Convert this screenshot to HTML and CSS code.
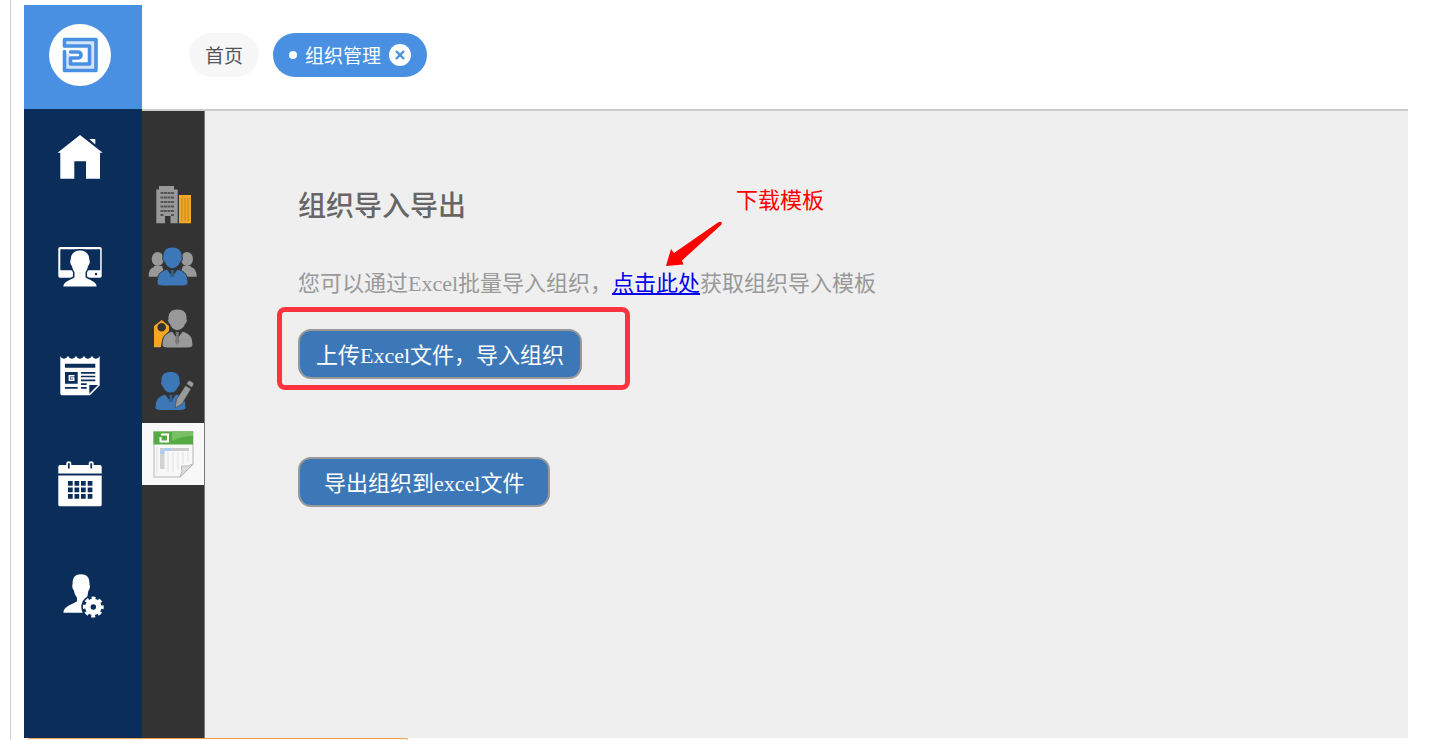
FILE: index.html
```html
<!DOCTYPE html>
<html lang="zh-CN">
<head>
    <meta charset="UTF-8">
    <meta name="viewport" content="width=device-width, initial-scale=1.0">
    <title>组织管理</title>
    <link rel="stylesheet" href="styles.css">
</head>
<body>
    <div class="page">
        <div class="app">
            <div class="sidebar">
                <a class="logo" href="#" aria-label="logo">
                    <svg width="62" height="62" viewBox="0 0 62 62">
                        <circle cx="31" cy="31" r="31" fill="#fff"/>
                        <path d="M15 18.5H44V43.5H18V30" fill="none" stroke="#d3e4f8" stroke-width="6"/>
                        <g fill="none" stroke="#4a90e2" stroke-width="3.6" stroke-linejoin="round" stroke-linecap="round">
                            <path d="M15.500 22V15.500H47V46.500H15.500V27.500"/>
                            <path d="M15.500 22H40.500V40H21.500V34H28.500Q32 34 32 31T28.500 28H21.500"/>
                        </g>
                    </svg>
                </a>
                <nav class="main-nav">
                    <a href="#" aria-label="首页">
                        <svg viewBox="0 0 48 48">
                            <path d="M24 1L46.700 18.700H44V44.700H30V27.300H18.300V44.700H4.300V18.700H1.500ZM33.300 5H39.300V10.500Z"/>
                        </svg>
                    </a>
                    <a href="#" aria-label="用户">
                        <svg viewBox="0 0 48 48">
                            <path fill-rule="evenodd" d="M4 4H44Q45.700 4 45.700 5.500V33Q45.700 34.700 44 34.700H4Q2.300 34.700 2.300 33V5.500Q2.300 4 4 4ZM4.300 6.200V27.300H44.200V6.200Z"/>
                            <circle class="cut" cx="40" cy="31" r="1.200"/>
                            <path class="outlined" d="M24 7.500C18 7.500 14.700 11 14.700 17C13.500 18 14.500 22 16 23C16.500 26 17.500 28 18.500 29V34C17 37 8 37 7.300 43.500H40.700C40 37 31 37 29.500 34V29C30.500 28 31.500 26 32 23C33.500 22 34.500 18 33.300 17C33.300 11 30 7.500 24 7.500Z"/>
                        </svg>
                    </a>
                    <a href="#" aria-label="新闻">
                        <svg viewBox="0 0 48 48">
                            <path d="M4.300 4Q5.600 7 8 6.800T12 4Q13.500 7 16 6.800T20 4Q21.500 7 24 6.800T28 4Q29.500 7 32 6.800T36 4Q37.500 7 40 6.800T43.700 4V33.500L34 43.300H6Q4.300 43.300 4.300 41.500Z"/>
                            <path class="cut" d="M9 11.700H39.300V15.700H9ZM9 20H21.700V31.700H9ZM25 20H39.300V21.700H25ZM25 23.700H39.300V25.300H25ZM25 27.500H39.300V29.200H25ZM25 31.300H30.700V33H25ZM25 35H30.700V36.700H25ZM9 35H21.700V36.700H9ZM33.300 33H42L33.300 41.700Z"/>
                            <path d="M18.500 23.800H13.300V28.200H17.800V26H14.500" fill="none" stroke="#fff" stroke-width="1.400"/>
                        </svg>
                    </a>
                    <a href="#" aria-label="日历">
                        <svg viewBox="0 0 48 48">
                            <path d="M4 4H10.300V2Q10.300 .3 12.800 .3T15.300 2V4H32.700V2Q32.700 .3 35.200 .3T37.700 2V4H44Q45.700 4 45.700 5.700V12.500H2.300V5.700Q2.300 4 4 4ZM2.300 14.500H45.700V43.700Q45.700 45.300 44 45.300H4Q2.300 45.300 2.300 43.700Z"/>
                            <path class="cut" d="M12 2.200H13.700V7.500H12ZM34.400 2.200H36.100V7.500H34.400ZM12 20H16.700V24.700H12ZM18.500 20H23.200V24.700H18.500ZM25 20H29.700V24.700H25ZM31.700 20H36.400V24.700H31.700ZM12 26.500H16.700V31.200H12ZM18.500 26.500H23.200V31.200H18.500ZM25 26.500H29.700V31.200H25ZM31.700 26.500H36.400V31.200H31.700ZM12 33H16.700V37.700H12ZM18.500 33H23.200V37.700H18.500ZM25 33H29.700V37.700H25ZM31.700 33H36.400V37.700H31.700Z"/>
                        </svg>
                    </a>
                    <a href="#" aria-label="设置">
                        <svg viewBox="0 0 48 48">
                            <path d="M25 4.300C19.500 4.300 16.500 7 16.600 14C15.800 16 16.700 19.500 18 20.500C18.300 23.500 19.500 26 21 27.500V31C19 34 8 35 7.300 42.700H28L31 28C32 24 32 22 32.500 20.500C34 19 34.300 16 33.500 14C33.600 7 30.500 4.300 25 4.300Z"/>
                            <circle class="cut" cx="37.300" cy="37" r="12"/>
                            <circle cx="37.300" cy="37" r="5.500" fill="none" stroke="#fff" stroke-width="5.500"/>
                            <circle cx="37.300" cy="37" r="8.700" fill="none" stroke="#fff" stroke-width="3.400" stroke-dasharray="3.830 3" stroke-dashoffset="1.915"/>
                        </svg>
                    </a>
                </nav>
            </div>

            <div class="workspace">
                <header class="tabs">
                    <a class="tab" href="#">首页</a>
                    <div class="tab active">
                        <span class="dot"></span>
                        <span class="label">组织管理</span>
                        <button class="close" type="button" aria-label="关闭">
                            <svg width="22" height="22" viewBox="0 0 22 22">
                                <circle cx="11" cy="11" r="11" fill="#fff"/>
                                <path d="M7 7L15 15M15 7L7 15" stroke="#4a90e2" stroke-width="2.400"/>
                            </svg>
                        </button>
                    </div>
                </header>

                <div class="body">
                    <nav class="sub-nav">
                        <a href="#" aria-label="组织">
                            <svg viewBox="0 0 63 62">
                                <path d="M14.300 48.300V14.500H17V11H32V14.500H35.700V48.300H28.500V41H23V48.300Z" fill="#999"/>
                                <path d="M18.500 18H32M18.500 22.500H32M18.500 27H32M18.500 31.500H32M18.500 36H32M18.500 40H22M29 40H32" stroke="#555" stroke-width="2" stroke-dasharray="3 .5"/>
                                <path d="M37 20H49V48.300H37Z" fill="#f5a623"/>
                                <path d="M40 23V46M43 23V46M46 23V46" stroke="#bd872f" stroke-width="1"/>
                            </svg>
                        </a>
                        <a href="#" aria-label="人员">
                            <svg viewBox="0 0 63 62">
                                <g fill="#999">
                                    <ellipse cx="15.700" cy="22" rx="6" ry="7"/>
                                    <path d="M12 29H20L24 39.700H6.700Q6 32 12 30Z"/>
                                    <ellipse cx="45" cy="22" rx="6" ry="7"/>
                                    <path d="M49 29H41L37 39.700H54.700Q55 32 49 30Z"/>
                                </g>
                                <g fill="#3c78b8" stroke="#333" stroke-width="1">
                                    <path d="M15 47C15 37 18 35 25 32L30.300 39L35.600 32C43 35 46 37 46 47Q44 49 41 49H20Q17 49 15 47Z"/>
                                    <path d="M30.300 10C24 10 20.500 14 21 20C20 21 21 24 22.500 25C24 29 27 31.500 30.300 31.500S37 29 38.500 25C40 24 41 21 40 20C40.500 14 37 10 30.300 10Z"/>
                                </g>
                                <path d="M28.500 33H32L31.500 36L32.500 40H28L29.200 36Z" fill="#315f90"/>
                            </svg>
                        </a>
                        <a href="#" aria-label="角色">
                            <svg viewBox="0 0 63 62">
                                <path fill-rule="evenodd" fill="#f5a623" d="M19.700 21L27 27V32L21 39L18.700 48.300H12V27ZM19.700 24A4.300 4.300 0 1 0 19.700 32.600A4.300 4.300 0 1 0 19.700 24Z"/>
                                <g fill="#999" stroke="#333" stroke-width="1">
                                    <path d="M20 47C20 37 23 35 30 32L35.300 39L40.600 32C48 35 51 37 51 47Q49 49 46 49H25Q22 49 20 47Z"/>
                                    <path d="M35.300 10C29 10 25.500 14 26 20C25 21 26 24 27.500 25C29 29 32 31.500 35.300 31.500S42 29 43.500 25C45 24 46 21 45 20C45.500 14 42 10 35.300 10Z"/>
                                </g>
                                <path d="M33.500 33H37L36.500 36L37.500 43L35.300 46L33 43L34.200 36Z" fill="#777"/>
                            </svg>
                        </a>
                        <a href="#" aria-label="编辑">
                            <svg viewBox="0 0 63 62">
                                <g fill="#3c78b8" stroke="#333" stroke-width="1">
                                    <path d="M13 47.500C13 38 16 36 23 33L28.700 40L34 33C41 35 44 38 44 47.500Q42 49.500 39 49.500H18Q15 49.500 13 47.500Z"/>
                                    <path d="M28.700 10.500C22 10.500 18.500 14 19 20.500C18 21.500 19 24.500 20.500 25.500C22 29.500 25 32 28.700 32S35 29.500 36.500 25.500C38 24.500 39 21.500 38 20.500C38.500 14 35 10.500 28.700 10.500Z"/>
                                </g>
                                <path d="M27 34H30.500L30 37L31 41H26.500L27.700 37Z" fill="#315f90"/>
                                <path d="M33 47L34.500 38.500L43.500 24.500L49 28L40 43ZM44.500 23L46 20.500Q47 19 48.700 20L51 21.500Q52.300 22.700 51.300 24.300L49.800 26.600Z" fill="#999" stroke="#333" stroke-width=".5"/>
                            </svg>
                        </a>
                        <a class="current" href="#" aria-label="导入导出">
                            <svg viewBox="0 0 63 62">
                                <path d="M12 9H51V41L38 54H12Z" fill="#f8f8f8" stroke="#ccc" stroke-width="1.500"/>
                                <path d="M11.500 8.500H51V21.500H11.500Z" fill="#55aa44"/>
                                <path d="M30 8.500H51V13Q40 13 30 18Z" fill="#78bf65"/>
                                <path d="M19 11.500H26V18.500H18.500V14" fill="none" stroke="#fff" stroke-width="2"/>
                                <path d="M18 25H47V28H18Z" fill="#ccc"/>
                                <path d="M18 28H22.500V46H18Z" fill="#d2d2d2"/>
                                <path d="M22 25H29V28H22ZM18 28H22.500V31H18Z" fill="#abcdf5"/>
                                <path d="M15 24V51M26 29V49M31 29V49M36 29V46M41 29V41M46 29V39" stroke="#e0e0e0" stroke-width="1"/>
                                <path d="M51 41L38 54Q41 49 39.500 43Q46 44 51 41Z" fill="#ddd" stroke="#bbb" stroke-width="1"/>
                            </svg>
                        </a>
                    </nav>

                    <main class="content">
                        <h1>组织导入导出</h1>
                        <p class="hint">
                            您可以通过Excel批量导入组织，<a href="#">点击此处</a>获取组织导入模板
                            <span class="note">下载模板</span>
                            <svg class="arrow" width="58" height="46" viewBox="0 0 58 46">
                                <path d="M1 45L6 28L9 32L53 1.500Q55.500 0 56.500 1.500T56 4L17 39.500L18.500 43.500Z" fill="#f00"/>
                            </svg>
                        </p>
                        <div class="upload">
                            <button class="btn" type="button">上传Excel文件，导入组织</button>
                        </div>
                        <div class="export">
                            <button class="btn wide" type="button">导出组织到excel文件</button>
                        </div>
                    </main>
                </div>
            </div>
        </div>
        <div class="bottom-box"></div>
    </div>
</body>
</html>
```
FILE: styles.css
```css
* {
    box-sizing: border-box;
}
body {
    margin: 0;
    padding-left: 10px;
    background: #fff;
    font-family: "Liberation Serif", "Noto Sans CJK SC", serif;
}
a {
    text-decoration: none;
}
button {
    font-family: inherit;
    cursor: pointer;
}
.page {
    display: flex;
    flex-direction: column;
    height: 100vh;
    min-height: 640px;
    padding: 5px 22px 0 13px;
    border-left: 1px solid #d0d0d0;
    overflow: hidden;
}
.app {
    display: flex;
    flex: 1;
}

/* left sidebar */
.sidebar {
    width: 118px;
    background: #0a2e59;
}
.logo {
    display: flex;
    align-items: center;
    height: 104px;
    padding: 0 0 4px 25px;
    background: #4a90e2;
}
.main-nav {
    display: flex;
    flex-direction: column;
    gap: 61px;
    padding: 25px 0 0 32px;
}
.main-nav a,
.main-nav svg {
    display: block;
    width: 48px;
    height: 48px;
}
.main-nav svg {
    fill: #fff;
}
.main-nav .cut {
    fill: #0a2e59;
}
.main-nav .outlined {
    stroke: #0a2e59;
    stroke-width: 3px;
    paint-order: stroke;
}

/* tabs */
.workspace {
    display: flex;
    flex: 1;
    flex-direction: column;
}
.tabs {
    display: flex;
    align-items: center;
    gap: 14px;
    height: 106px;
    padding: 0 47px 4px;
    border-bottom: 2px solid #ccc;
}
.tab {
    display: flex;
    align-items: center;
    height: 44px;
    padding: 0 16px 2px;
    border-radius: 22px;
    background: #f7f7f7;
    color: #555;
    font-size: 19px;
}
.tab.active {
    gap: 8px;
    padding-bottom: 0;
    background: #4a90e2;
    color: #fff;
}
.label {
    padding-bottom: 2px;
}
.dot {
    width: 8px;
    height: 8px;
    border-radius: 50%;
    background: #fff;
}
.close {
    display: flex;
    padding: 0;
    border: none;
    background: none;
}

/* second level menu */
.body {
    display: flex;
    flex: 1;
}
.sub-nav {
    width: 63px;
    padding-top: 64px;
    border-right: 1px solid #777;
    background: #333;
}
.sub-nav a {
    display: block;
    height: 62px;
}
.sub-nav svg {
    display: block;
    width: 63px;
    height: 62px;
}
.sub-nav .current {
    background: #f8f8f8;
}

/* content */
.content {
    flex: 1;
    padding: 76px 93px 0;
    background: #efefef;
}
h1 {
    margin: 0;
    color: #666;
    font-size: 28px;
    font-weight: 500;
    line-height: 40px;
}
.hint {
    position: relative;
    margin: 41px 0 29px;
    color: #999;
    font-size: 22px;
    line-height: 32px;
}
.hint a {
    color: #00e;
    text-decoration: underline;
}
.note {
    position: absolute;
    top: -83px;
    left: 438px;
    color: #f00;
}
.arrow {
    position: absolute;
    top: -47px;
    left: 367px;
}
.btn {
    display: block;
    height: 50px;
    padding: 0 16px 2px;
    border: 2px solid #999;
    border-radius: 13px;
    background: #3c78b8;
    color: #fff;
    font-size: 22px;
}
.btn.wide {
    padding: 0 24px 2px;
}
.upload {
    position: relative;
    width: fit-content;
    margin-bottom: 78px;
}
.upload::before {
    content: "";
    position: absolute;
    inset: -22px -48px -11px -21px;
    border: 5px solid #fd3440;
    border-radius: 8px;
    pointer-events: none;
}

.bottom-box {
    width: 380px;
    height: 2px;
    margin-left: 4px;
    border: 1px solid #e5a550;
    border-bottom: none;
    border-radius: 4px 4px 0 0;
    background: #fffaf0;
}
```
